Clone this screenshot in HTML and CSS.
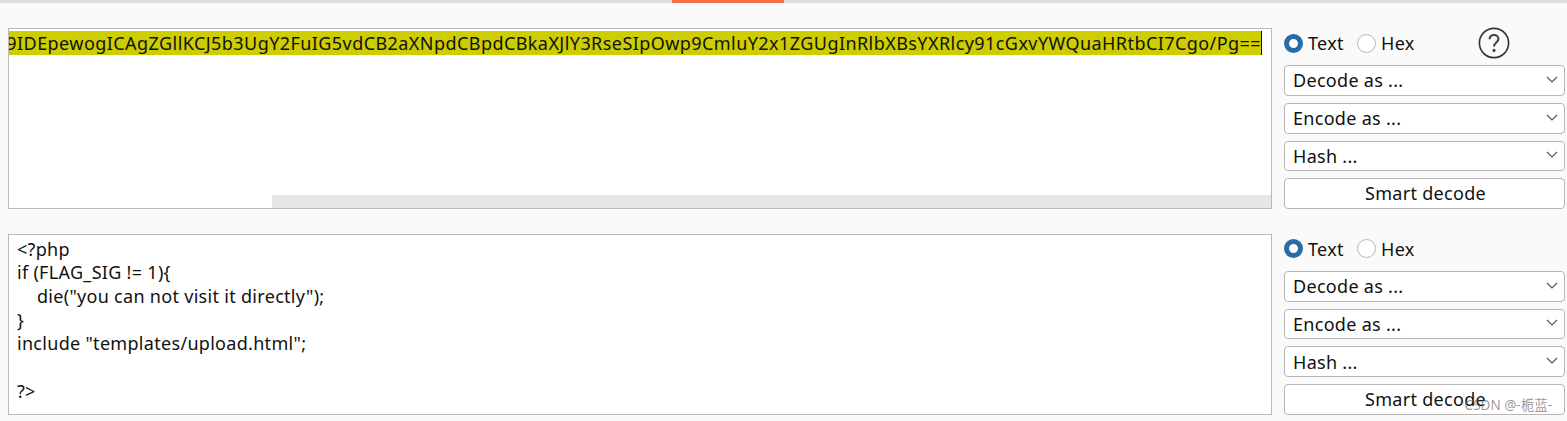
FILE: index.html
```html
<!DOCTYPE html>
<html lang="en">
<head>
<meta charset="utf-8">
<title>Decoder</title>
<link rel="stylesheet" href="styles.css">
</head>
<body>
<div class="page">
  <div class="topbar"><div class="tab-mark"></div></div>

  <section class="panel">
    <div class="editor">
      <div class="line-scroll"><span class="selected">9IDEpewogICAgZGllKCJ5b3UgY2FuIG5vdCB2aXNpdCBpdCBkaXJlY3RseSIpOwp9CmluY2x1ZGUgInRlbXBsYXRlcy91cGxvYWQuaHRtbCI7Cgo/Pg==</span><span class="caret"></span></div>
      <div class="hscroll"></div>
    </div>
    <div class="side">
      <div class="radios">
        <span class="radio on"></span><span class="radio-label">Text</span>
        <span class="radio"></span><span class="radio-label">Hex</span>
        <svg class="help" viewBox="0 0 32 32" width="32" height="32" aria-label="Help">
          <circle cx="16" cy="16" r="14.6" fill="none" stroke="#333" stroke-width="1.6"/>
          <path d="M11.6 12.2c0-2.6 2-4.2 4.4-4.2s4.4 1.6 4.4 3.9c0 3.7-4.4 3.6-4.4 7.6" fill="none" stroke="#444" stroke-width="2.2"/>
          <circle cx="16" cy="23.4" r="1.6" fill="#444"/>
        </svg>
      </div>
      <div class="control select"><span>Decode as ...</span><svg class="chev" viewBox="0 0 12 7" width="12" height="7"><path d="M1 1l5 5 5-5" fill="none" stroke="#555" stroke-width="1.2"/></svg></div>
      <div class="control select"><span>Encode as ...</span><svg class="chev" viewBox="0 0 12 7" width="12" height="7"><path d="M1 1l5 5 5-5" fill="none" stroke="#555" stroke-width="1.2"/></svg></div>
      <div class="control select"><span>Hash ...</span><svg class="chev" viewBox="0 0 12 7" width="12" height="7"><path d="M1 1l5 5 5-5" fill="none" stroke="#555" stroke-width="1.2"/></svg></div>
      <div class="control button">Smart decode</div>
    </div>
  </section>

  <section class="panel second">
    <div class="editor">
<pre class="code">&lt;?php
if (FLAG_SIG != 1){
    die("you can not visit it directly");
}
include "templates/upload.html";

?&gt;</pre>
    </div>
    <div class="side">
      <div class="radios">
        <span class="radio on"></span><span class="radio-label">Text</span>
        <span class="radio"></span><span class="radio-label">Hex</span>
      </div>
      <div class="control select"><span>Decode as ...</span><svg class="chev" viewBox="0 0 12 7" width="12" height="7"><path d="M1 1l5 5 5-5" fill="none" stroke="#555" stroke-width="1.2"/></svg></div>
      <div class="control select"><span>Encode as ...</span><svg class="chev" viewBox="0 0 12 7" width="12" height="7"><path d="M1 1l5 5 5-5" fill="none" stroke="#555" stroke-width="1.2"/></svg></div>
      <div class="control select"><span>Hash ...</span><svg class="chev" viewBox="0 0 12 7" width="12" height="7"><path d="M1 1l5 5 5-5" fill="none" stroke="#555" stroke-width="1.2"/></svg></div>
      <div class="control button">Smart decode</div>
    </div>
  </section>

  <div class="watermark">CSDN @-栀蓝-</div>
</div>
</body>
</html>
```

FILE: styles.css
```css
* { box-sizing: border-box; }
html, body { margin: 0; padding: 0; }
body {
  background: #fafafa;
  color: #111;
  font-family: "Noto Sans", "Noto Sans CJK SC", sans-serif;
  font-size: 18px;
  letter-spacing: 0.3px;
}
.page {
  position: relative;
  width: 1567px;
  height: 421px;
  overflow: hidden;
}
.topbar {
  height: 3px;
  background: #dcdddc;
  padding-left: 672px;
}
.tab-mark {
  width: 112px;
  height: 3px;
  background: #f4704a;
}
.panel {
  display: flex;
  height: 181px;
  margin: 25px 2px 0 8px;
  gap: 12px;
}
.editor {
  display: flex;
  flex-direction: column;
  justify-content: space-between;
  width: 1264px;
  background: #fff;
  border: 1px solid #bdb9ba;
}
.line-scroll {
  display: flex;
  justify-content: flex-end;
  align-items: stretch;
  height: 24px;
  margin-top: 2px;
  padding-right: 9px;
  overflow: hidden;
  white-space: nowrap;
}
.selected {
  flex: none;
  background: #cdcd00;
  line-height: 24px;
  letter-spacing: 0.43px;
}
.caret {
  flex: none;
  width: 1px;
  background: #111;
}
.hscroll {
  height: 13px;
  margin-left: 263px;
  background: #e6e6e6;
}
.code {
  margin: 0;
  padding: 2.5px 8px;
  font: inherit;
  letter-spacing: inherit;
  line-height: 23.7px;
  white-space: pre;
}
.side {
  display: flex;
  flex-direction: column;
  width: 281px;
  gap: 7px;
}
.radios {
  display: flex;
  align-items: center;
  height: 30px;
}
.radio {
  width: 19px;
  height: 19px;
  border: 1px solid #b8b8b8;
  border-radius: 50%;
  background: #fff;
}
.radio.on {
  border: 5px solid #2a6aa5;
}
.radio-label {
  margin-left: 5px;
  width: 49px;
}
.radio-label:last-of-type { width: 52px; }
.help { margin-left: 45px; }
.control {
  height: 31px;
  background: #fff;
  border: 1px solid #b9b5b6;
  border-radius: 4px;
  line-height: 28px;
}
.select {
  display: flex;
  justify-content: space-between;
  align-items: center;
  padding: 0 6px 0 8px;
}
.chev { margin-top: -2px; }
.button {
  padding-left: 2px;
  text-align: center;
}
.watermark {
  position: absolute;
  right: 15px;
  bottom: 8px;
  font-size: 13.5px;
  letter-spacing: 0;
  line-height: 16px;
  color: rgba(90, 90, 90, 0.62);
}
```
